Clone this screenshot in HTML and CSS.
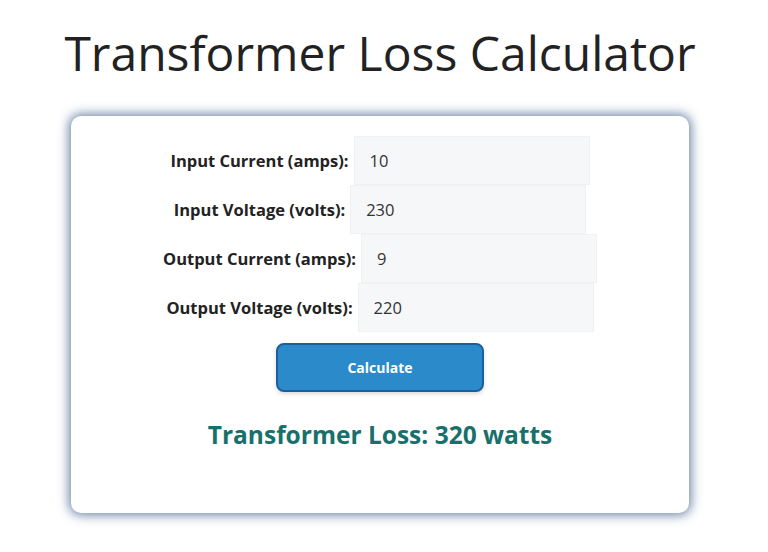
FILE: index.html
```html
<!DOCTYPE html>
<html lang="en">
<head>
  <meta charset="UTF-8">
  <meta name="viewport" content="width=device-width, initial-scale=1.0">
  <title>Transformer Loss Calculator</title>
  <link rel="stylesheet" href="styles.css">
</head>
<body>
  <h1 class="title">Transformer Loss Calculator</h1>

  <div class="calculator">
    <div class="form-row">
      <label for="input-current">Input Current (amps):</label>
      <input type="number" id="input-current" value="10">
    </div>
    <div class="form-row">
      <label for="input-voltage">Input Voltage (volts):</label>
      <input type="number" id="input-voltage" value="230">
    </div>
    <div class="form-row">
      <label for="output-current">Output Current (amps):</label>
      <input type="number" id="output-current" value="9">
    </div>
    <div class="form-row">
      <label for="output-voltage">Output Voltage (volts):</label>
      <input type="number" id="output-voltage" value="220">
    </div>

    <button class="calc-btn" id="calc-btn">Calculate</button>

    <div class="result" id="result">Transformer Loss: 320 watts</div>
  </div>
</body>
</html>
```

FILE: styles.css
```css
* {
  margin: 0;
  padding: 0;
  box-sizing: border-box;
}

body {
  padding: 0 8px 30px 0;
  font-family: 'Open Sans', 'Noto Sans', sans-serif;
  background: #ffffff;
  color: #222;
}

.title {
  margin: 24px 0 34px;
  font-size: 48px;
  font-weight: 400;
  line-height: 1.2;
  text-align: center;
  color: #222;
}

.calculator {
  width: 618px;
  height: 397px;
  margin: 0 auto;
  padding-top: 20px;
  background: #fff;
  border-radius: 10px;
  box-shadow: 0 0 11px 2px rgba(50, 85, 135, 0.72);
  display: flex;
  flex-direction: column;
  align-items: center;
}

.form-row {
  display: flex;
  align-items: center;
  justify-content: center;
  gap: 5px;
  height: 49px;
}

.form-row label {
  font-size: 16.5px;
  font-weight: 700;
  color: #222;
}

.form-row input {
  width: 236px;
  height: 49px;
  padding: 0 15px;
  border: 1px solid #f0f1f3;
  background: #f6f7f9;
  font-family: inherit;
  font-size: 16.5px;
  color: #333;
  outline: none;
  -moz-appearance: textfield;
}

.form-row input::-webkit-inner-spin-button,
.form-row input::-webkit-outer-spin-button {
  -webkit-appearance: none;
}

.calc-btn {
  width: 208px;
  height: 49px;
  margin-top: 11px;
  border: 2px solid #1d5f9c;
  border-radius: 8px;
  background: #2b8bca;
  color: #fff;
  font-family: inherit;
  font-size: 14px;
  font-weight: 700;
  cursor: pointer;
  box-shadow: 0 2px 4px rgba(0, 0, 0, 0.15);
}

.result {
  margin-top: 26px;
  font-size: 24.5px;
  font-weight: 700;
  color: #17706c;
}
```
